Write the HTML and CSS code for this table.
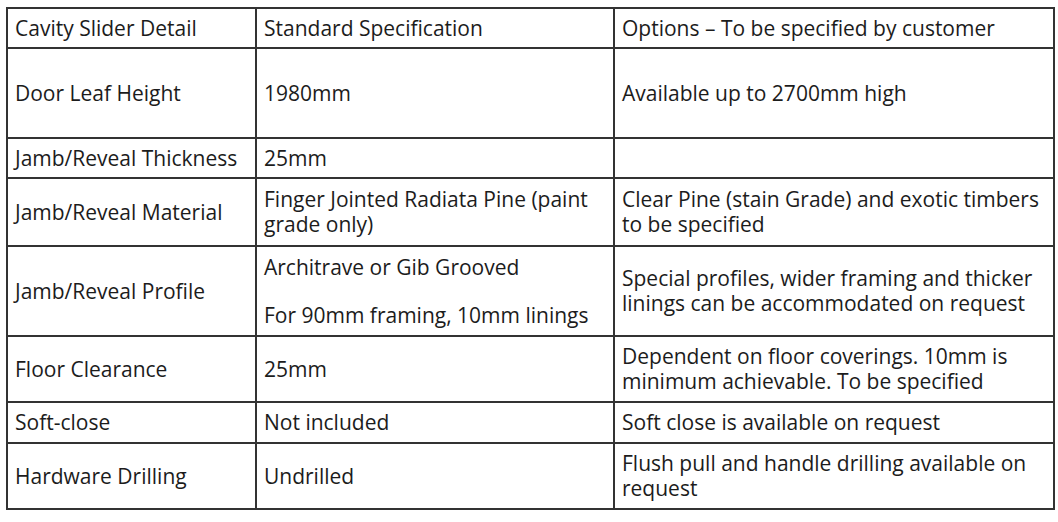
FILE: index.html
```html
<!DOCTYPE html>
<html>
<head>
<meta charset="utf-8">
<link rel="stylesheet" href="styles.css">
</head>
<body>
<table class="spec">
  <colgroup>
    <col class="c1"><col class="c2"><col class="c3">
  </colgroup>
  <tr class="r-head">
    <td>Cavity Slider Detail</td>
    <td>Standard Specification</td>
    <td>Options – To be specified by customer</td>
  </tr>
  <tr class="r-tall">
    <td>Door Leaf Height</td>
    <td>1980mm</td>
    <td>Available up to 2700mm high</td>
  </tr>
  <tr class="r-head">
    <td>Jamb/Reveal Thickness</td>
    <td>25mm</td>
    <td></td>
  </tr>
  <tr class="r-mid">
    <td>Jamb/Reveal Material</td>
    <td>Finger Jointed Radiata Pine (paint grade only)</td>
    <td>Clear Pine (stain Grade) and exotic timbers to be specified</td>
  </tr>
  <tr class="r-tall">
    <td>Jamb/Reveal Profile</td>
    <td><p class="para">Architrave or Gib Grooved</p><p class="para">For 90mm framing, 10mm linings</p></td>
    <td>Special profiles, wider framing and thicker linings can be accommodated on request</td>
  </tr>
  <tr class="r-mid2">
    <td>Floor Clearance</td>
    <td>25mm</td>
    <td>Dependent on floor coverings. 10mm is minimum achievable. To be specified</td>
  </tr>
  <tr class="r-short">
    <td>Soft-close</td>
    <td>Not included</td>
    <td>Soft close is available on request</td>
  </tr>
  <tr class="r-mid2">
    <td>Hardware Drilling</td>
    <td>Undrilled</td>
    <td>Flush pull and handle drilling available on request</td>
  </tr>
</table>
</body>
</html>
```

FILE: styles.css
```css
html, body {
  margin: 0;
  padding: 0;
  background: #ffffff;
}
body {
  padding: 7px 0 0 6px;
  font-family: "Open Sans", "Liberation Sans", sans-serif;
  font-size: 21px;
  line-height: 25px;
  color: #1c1c1c;
}
.spec {
  border-collapse: collapse;
  width: 1047px;
  table-layout: fixed;
}
.c1 { width: 249px; }
.c2 { width: 358px; }
.c3 { width: 440px; }
.spec td {
  border: 2px solid #333333;
  padding: 0 6px 0 7px;
  vertical-align: middle;
}
.r-head td { height: 38px; }
.r-tall td { height: 88px; }
.r-mid td { height: 66px; }
.r-mid2 td { height: 64px; }
.r-short td { height: 39px; }
.para { margin: 0; }
.para + .para { margin-top: 23px; }
```
